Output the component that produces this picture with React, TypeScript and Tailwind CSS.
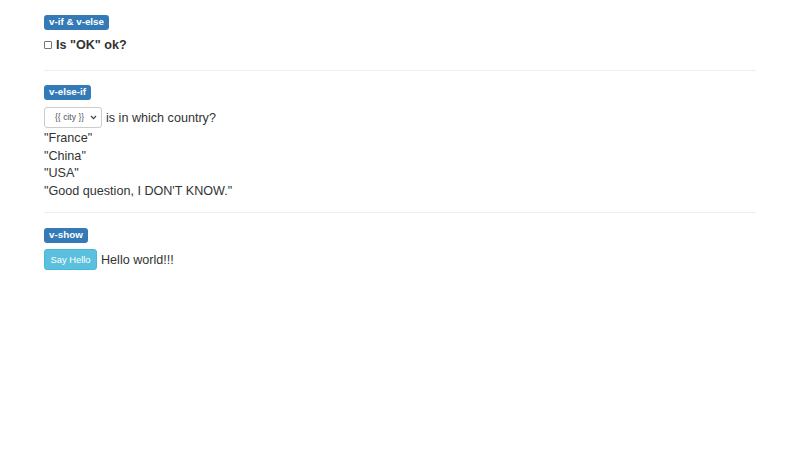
import React from "react";

function Label({ children }: { children: React.ReactNode }) {
  return (
    <div className="flex h-[15px] w-fit items-center rounded-[3px] bg-[#337ab7] px-[5px] pb-[1px] text-[9.8px] font-bold leading-[10px] text-white">
      {children}
    </div>
  );
}

export default function App() {
  return (
    <div
      className="min-h-[450px] w-[800px] bg-white px-[44px] pt-[15px] text-[#333]"
      style={{ fontFamily: '"Liberation Sans", Arial, sans-serif' }}
    >
      <div>
        <Label>v-if &amp; v-else</Label>
        <div className="mt-[6px] flex h-[18px] items-center gap-[4px]">
          <input
            type="checkbox"
            className="m-0 h-[8px] w-[8px] appearance-none rounded-[1px] border border-[#767676] bg-white"
          />
          <span className="text-[12.6px] font-bold leading-[18px]">Is "OK" ok?</span>
        </div>
      </div>
      <hr className="mt-[16px] mb-[14px] border-0 border-t border-[#eee]" />
      <div>
        <Label>v-else-if</Label>
        <div className="mt-[7px] flex h-[21px] items-center gap-[4px]">
          <div className="flex h-[21px] w-[58px] items-center justify-between rounded-[3px] border border-[#ccc] bg-white pl-[10px] pr-[4px]">
            <span className="text-[8.6px] text-[#555]">{"{{ city }}"}</span>
            <svg width="7" height="5" viewBox="0 0 7 5">
              <path d="M1 1 L3.5 3.6 L6 1" fill="none" stroke="#444" strokeWidth="1.3" />
            </svg>
          </div>
          <span className="text-[12.6px] leading-[18px]">is in which country?</span>
        </div>
        <div className="mt-[2px] text-[12.6px] leading-[17.6px]">
          <div>"France"</div>
          <div>"China"</div>
          <div>"USA"</div>
          <div>"Good question, I DON'T KNOW."</div>
        </div>
      </div>
      <hr className="mt-[12px] mb-[15px] border-0 border-t border-[#eee]" />
      <div>
        <Label>v-show</Label>
        <div className="mt-[6px] flex h-[21px] items-center gap-[4px]">
          <button className="flex h-[21px] w-[53px] items-center justify-center rounded-[3px] border border-[#46b8da] bg-[#5bc0de] text-[9.4px] text-white">
            Say Hello
          </button>
          <span className="text-[12.6px] leading-[18px]">Hello world!!!</span>
        </div>
      </div>
    </div>
  );
}
